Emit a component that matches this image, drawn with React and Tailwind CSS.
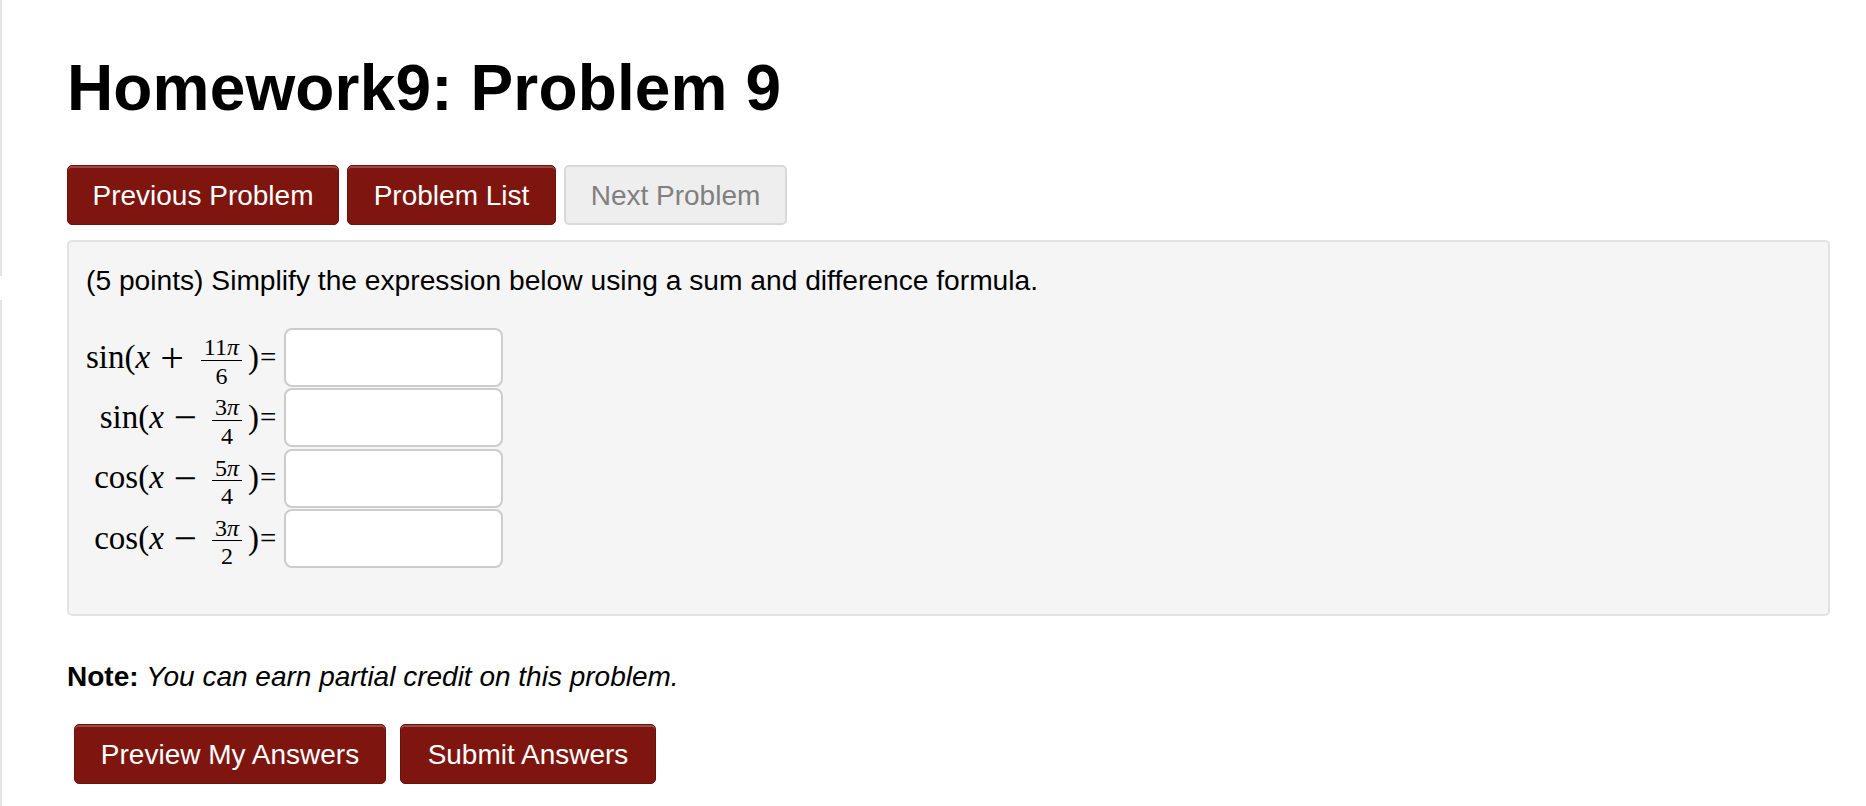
const sans = "font-['Liberation_Sans',Arial,sans-serif]";
const red = "rounded-[5px] border border-[#6a120c] bg-[#7e160f] text-white shadow-[inset_0_2px_0_#9a4a44]";

function Btn({ children, className = "" }) {
  return (
    <button className={`h-[60px] pt-[2px] flex items-center justify-center text-[28px] leading-none ${className}`}>
      {children}
    </button>
  );
}

function Fraction({ n, d }) {
  return (
    <span className="self-start mt-[7px] ml-[3px] mr-[6px] inline-flex flex-col items-center text-[24px] leading-[24px]">
      <span className="px-[3px] border-b-[1.5px] border-black h-[25.5px]">{n}</span>
      <span className="pt-[3px]">{d}</span>
    </span>
  );
}

function Row({ fn, op, opClass, n, d }) {
  return (
    <>
      <div className="flex items-center justify-end text-[33px] text-black font-['Liberation_Serif',serif] h-[59px] whitespace-nowrap">
        <span>{fn}(</span>
        <i>x</i>
        <span className={opClass}>{op}</span>
        <Fraction n={n} d={d} />
        <span>)</span>
        <span className="text-[29px] ml-[1px]">=</span>
      </div>
      <input className="w-[219px] h-[59px] rounded-[8px] border-2 border-[#cccccc] bg-white" aria-label={`${fn} answer`} />
    </>
  );
}

export default function App() {
  const pi = <i>π</i>;
  const minus = "text-[41px] leading-none ml-[10px] mr-[12px]";
  return (
    <div className={`relative w-[1866px] h-[806px] overflow-hidden bg-white text-black pl-[67px] pr-[36px] pt-[50px] ${sans}`}>
      <div className="absolute left-0 top-0 w-[2px] h-[276px] bg-[#e4e4e4]" />
      <div className="absolute left-0 top-[300px] bottom-0 w-[2px] bg-[#e4e4e4]" />

      <h1 className="text-[64px] leading-[76px] font-bold tracking-[0.15px]">Homework9: Problem 9</h1>

      <div className="flex gap-2 mt-[39px]">
        <Btn className={`w-[272px] ${red}`}>Previous Problem</Btn>
        <Btn className={`w-[209px] ${red}`}>Problem List</Btn>
        <Btn className="w-[223px] rounded-[5px] border-2 border-[#d8d8d8] bg-[#eeeeee] text-[#808080]">Next Problem</Btn>
      </div>

      <div className="mt-[15px] h-[376px] rounded-[5px] border-2 border-[#e3e3e3] bg-[#f5f5f5] pl-[17px] pt-[21px]">
        <p className="text-[28.2px] leading-[34px]">(5 points) Simplify the expression below using a sum and difference formula.</p>
        <div className="mt-[31px] grid grid-cols-[auto_auto] w-max gap-x-[8px] gap-y-[1.3px] items-center">
          <Row fn="sin" op="+" opClass="text-[42px] leading-none ml-[10px] mr-[14px]" n={<>11{pi}</>} d="6" />
          <Row fn="sin" op="−" opClass={minus} n={<>3{pi}</>} d="4" />
          <Row fn="cos" op="−" opClass={minus} n={<>5{pi}</>} d="4" />
          <Row fn="cos" op="−" opClass={minus} n={<>3{pi}</>} d="2" />
        </div>
      </div>

      <p className="mt-[44px] text-[28px] leading-[34px]"><b>Note:</b> <i>You can earn partial credit on this problem.</i></p>

      <div className="flex gap-[14px] mt-[30px] ml-[7px]">
        <Btn className={`w-[312px] ${red}`}>Preview My Answers</Btn>
        <Btn className={`w-[256px] ${red}`}>Submit Answers</Btn>
      </div>
    </div>
  );
}
